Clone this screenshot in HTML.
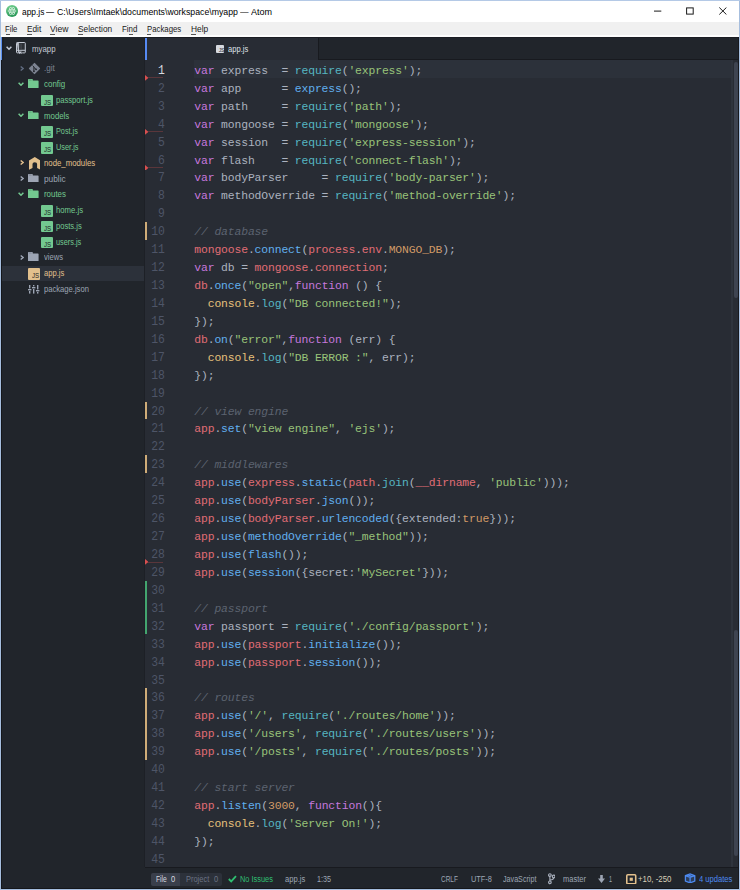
<!DOCTYPE html>
<html><head><meta charset="utf-8"><title>app.js - Atom</title>
<style>
html,body{margin:0;padding:0}
body{width:740px;height:890px;overflow:hidden;position:relative;background:#282c34;font-family:"Liberation Sans",sans-serif}
.abs{position:absolute}
#title{position:absolute;left:0;top:0;width:740px;height:22px;background:#fff}
#title .t{position:absolute;left:22px;top:4px;font-size:11.4px;color:#111;white-space:nowrap;letter-spacing:-0.1px}
#menu{position:absolute;left:0;top:22px;width:740px;height:13px;background:#f0f0f0}
#menu span{position:absolute;top:1px;font-size:11.2px;color:#111;white-space:nowrap}
#menu u{text-decoration:underline;text-underline-offset:1px}
#side{position:absolute;left:0;top:37px;width:145px;height:853px;background:#21252b}
#tabs{position:absolute;left:145px;top:37px;width:595px;height:23px;background:#21252b}
#tab{position:absolute;left:0;top:0;width:173px;height:23px;background:#282c34;border-left:2px solid #568af2;box-sizing:border-box}
#tab .tt{position:absolute;left:81px;top:5px;font-size:10.4px;color:#d7dae0;white-space:nowrap}
.ft{position:absolute;line-height:12px;height:12px;white-space:nowrap;transform-origin:0 50%;display:block}
.tl{font-size:10.4px;line-height:15.75px;white-space:nowrap;letter-spacing:-0.1px}
.sel{left:2px;width:142px;height:15.2px;background:#2c313a}
.jsi{width:12px;height:12px;border-radius:1.5px;overflow:hidden}
.jsi span{position:absolute;right:0.5px;bottom:-0.5px;font-size:7.5px;line-height:8px;color:#21252b;letter-spacing:-0.3px}
#ed{position:absolute;left:145px;top:60px;width:595px;height:807px;background:#282c34;overflow:hidden}
.ln{position:absolute;left:194.3px;height:18px;line-height:18px;margin-top:1.7px;font-family:"Liberation Mono",monospace;font-size:11.4px;letter-spacing:-0.136px;color:#abb2bf;white-space:pre}
.num{position:absolute;left:145px;width:19.6px;text-align:right;height:18px;line-height:18px;margin-top:1.7px;font-family:"Liberation Mono",monospace;font-size:11.4px;letter-spacing:-0.136px;color:#4e5567;transform:scaleY(1.07);transform-origin:50% 75%}
.num.cur{color:#d7dae0}
.k{color:#c678dd}.s{color:#98c379}.f{color:#61afef}.c{color:#56b6c2}.v{color:#e06c75}.n{color:#d19a66}.o{color:#e5c07b}.m{color:#5c6370;font-style:italic}
#curline{position:absolute;left:194px;top:60px;width:537px;height:18px;background:#2c313a}
.gbar{position:absolute;left:145px;width:1.5px}
.gdel{position:absolute;left:145px;width:0;height:0;border-top:2.9px solid transparent;border-bottom:2.9px solid transparent;border-left:3.4px solid #e05252}
.gdelline{position:absolute;left:148px;width:15px;height:1px;background:#e05252;opacity:.27}
#clip{position:absolute;left:0;top:0;width:740px;height:867px;overflow:hidden}
#status{position:absolute;left:145px;top:867px;width:595px;height:23px;background:#21252b;border-top:1px solid #181a1f;box-sizing:border-box}
#status span{position:absolute;top:5.5px;font-size:9.6px;color:#9da5b4;white-space:nowrap}
</style></head><body>
<div id="clip">
<div id="curline"></div>
<div class="gbar" style="top:222.27px;height:17.53px;background:#cfac78"></div><div class="gbar" style="top:401.57px;height:17.53px;background:#cfac78"></div><div class="gbar" style="top:455.36px;height:17.53px;background:#cfac78"></div><div class="gbar" style="top:580.87px;height:53.39px;background:#43a56f"></div><div class="gbar" style="top:688.45px;height:71.32px;background:#cfac78"></div><svg class="abs" style="left:144.8px;top:74.93px" width="3.4" height="5.8" viewBox="0 0 3.4 5.8"><path d="M0 0 L3.4 2.9 L0 5.8 Z" fill="#d95050"/></svg><div class="gdelline" style="top:77.43px"></div><svg class="abs" style="left:144.8px;top:128.72px" width="3.4" height="5.8" viewBox="0 0 3.4 5.8"><path d="M0 0 L3.4 2.9 L0 5.8 Z" fill="#d95050"/></svg><div class="gdelline" style="top:131.22px"></div><svg class="abs" style="left:144.8px;top:164.58px" width="3.4" height="5.8" viewBox="0 0 3.4 5.8"><path d="M0 0 L3.4 2.9 L0 5.8 Z" fill="#d95050"/></svg><div class="gdelline" style="top:167.08px"></div><svg class="abs" style="left:144.8px;top:559.04px" width="3.4" height="5.8" viewBox="0 0 3.4 5.8"><path d="M0 0 L3.4 2.9 L0 5.8 Z" fill="#d95050"/></svg><div class="gdelline" style="top:561.54px"></div>
<div class="num cur" style="top:60.20px">1</div><div class="num" style="top:78.13px">2</div><div class="num" style="top:96.06px">3</div><div class="num" style="top:113.99px">4</div><div class="num" style="top:131.92px">5</div><div class="num" style="top:149.85px">6</div><div class="num" style="top:167.78px">7</div><div class="num" style="top:185.71px">8</div><div class="num" style="top:203.64px">9</div><div class="num" style="top:221.57px">10</div><div class="num" style="top:239.50px">11</div><div class="num" style="top:257.43px">12</div><div class="num" style="top:275.36px">13</div><div class="num" style="top:293.29px">14</div><div class="num" style="top:311.22px">15</div><div class="num" style="top:329.15px">16</div><div class="num" style="top:347.08px">17</div><div class="num" style="top:365.01px">18</div><div class="num" style="top:382.94px">19</div><div class="num" style="top:400.87px">20</div><div class="num" style="top:418.80px">21</div><div class="num" style="top:436.73px">22</div><div class="num" style="top:454.66px">23</div><div class="num" style="top:472.59px">24</div><div class="num" style="top:490.52px">25</div><div class="num" style="top:508.45px">26</div><div class="num" style="top:526.38px">27</div><div class="num" style="top:544.31px">28</div><div class="num" style="top:562.24px">29</div><div class="num" style="top:580.17px">30</div><div class="num" style="top:598.10px">31</div><div class="num" style="top:616.03px">32</div><div class="num" style="top:633.96px">33</div><div class="num" style="top:651.89px">34</div><div class="num" style="top:669.82px">35</div><div class="num" style="top:687.75px">36</div><div class="num" style="top:705.68px">37</div><div class="num" style="top:723.61px">38</div><div class="num" style="top:741.54px">39</div><div class="num" style="top:759.47px">40</div><div class="num" style="top:777.40px">41</div><div class="num" style="top:795.33px">42</div><div class="num" style="top:813.26px">43</div><div class="num" style="top:831.19px">44</div><div class="num" style="top:849.12px">45</div>
<div class="ln" style="top:60.20px"><span class="k">var</span> express  = <span class="c">require</span>(<span class="s">'express'</span>);</div><div class="ln" style="top:78.13px"><span class="k">var</span> app      = <span class="f">express</span>();</div><div class="ln" style="top:96.06px"><span class="k">var</span> path     = <span class="c">require</span>(<span class="s">'path'</span>);</div><div class="ln" style="top:113.99px"><span class="k">var</span> mongoose = <span class="c">require</span>(<span class="s">'mongoose'</span>);</div><div class="ln" style="top:131.92px"><span class="k">var</span> session  = <span class="c">require</span>(<span class="s">'express-session'</span>);</div><div class="ln" style="top:149.85px"><span class="k">var</span> flash    = <span class="c">require</span>(<span class="s">'connect-flash'</span>);</div><div class="ln" style="top:167.78px"><span class="k">var</span> bodyParser     = <span class="c">require</span>(<span class="s">'body-parser'</span>);</div><div class="ln" style="top:185.71px"><span class="k">var</span> methodOverride = <span class="c">require</span>(<span class="s">'method-override'</span>);</div><div class="ln" style="top:203.64px"></div><div class="ln" style="top:221.57px"><span class="m">// database</span></div><div class="ln" style="top:239.50px"><span class="v">mongoose</span>.<span class="f">connect</span>(<span class="v">process</span>.<span class="v">env</span>.<span class="n">MONGO_DB</span>);</div><div class="ln" style="top:257.43px"><span class="k">var</span> db = <span class="v">mongoose</span>.<span class="v">connection</span>;</div><div class="ln" style="top:275.36px"><span class="v">db</span>.<span class="f">once</span>(<span class="s">"open"</span>,<span class="k">function</span> () {</div><div class="ln" style="top:293.29px">  <span class="o">console</span>.<span class="c">log</span>(<span class="s">"DB connected!"</span>);</div><div class="ln" style="top:311.22px">});</div><div class="ln" style="top:329.15px"><span class="v">db</span>.<span class="f">on</span>(<span class="s">"error"</span>,<span class="k">function</span> (err) {</div><div class="ln" style="top:347.08px">  <span class="o">console</span>.<span class="c">log</span>(<span class="s">"DB ERROR :"</span>, err);</div><div class="ln" style="top:365.01px">});</div><div class="ln" style="top:382.94px"></div><div class="ln" style="top:400.87px"><span class="m">// view engine</span></div><div class="ln" style="top:418.80px"><span class="v">app</span>.<span class="f">set</span>(<span class="s">"view engine"</span>, <span class="s">'ejs'</span>);</div><div class="ln" style="top:436.73px"></div><div class="ln" style="top:454.66px"><span class="m">// middlewares</span></div><div class="ln" style="top:472.59px"><span class="v">app</span>.<span class="f">use</span>(<span class="v">express</span>.<span class="f">static</span>(<span class="v">path</span>.<span class="c">join</span>(<span class="v">__dirname</span>, <span class="s">'public'</span>)));</div><div class="ln" style="top:490.52px"><span class="v">app</span>.<span class="f">use</span>(<span class="v">bodyParser</span>.<span class="f">json</span>());</div><div class="ln" style="top:508.45px"><span class="v">app</span>.<span class="f">use</span>(<span class="v">bodyParser</span>.<span class="f">urlencoded</span>({extended:<span class="n">true</span>}));</div><div class="ln" style="top:526.38px"><span class="v">app</span>.<span class="f">use</span>(<span class="f">methodOverride</span>(<span class="s">"_method"</span>));</div><div class="ln" style="top:544.31px"><span class="v">app</span>.<span class="f">use</span>(<span class="f">flash</span>());</div><div class="ln" style="top:562.24px"><span class="v">app</span>.<span class="f">use</span>(<span class="f">session</span>({secret:<span class="s">'MySecret'</span>}));</div><div class="ln" style="top:580.17px"></div><div class="ln" style="top:598.10px"><span class="m">// passport</span></div><div class="ln" style="top:616.03px"><span class="k">var</span> passport = <span class="c">require</span>(<span class="s">'./config/passport'</span>);</div><div class="ln" style="top:633.96px"><span class="v">app</span>.<span class="f">use</span>(<span class="v">passport</span>.<span class="f">initialize</span>());</div><div class="ln" style="top:651.89px"><span class="v">app</span>.<span class="f">use</span>(<span class="v">passport</span>.<span class="f">session</span>());</div><div class="ln" style="top:669.82px"></div><div class="ln" style="top:687.75px"><span class="m">// routes</span></div><div class="ln" style="top:705.68px"><span class="v">app</span>.<span class="f">use</span>(<span class="s">'/'</span>, <span class="c">require</span>(<span class="s">'./routes/home'</span>));</div><div class="ln" style="top:723.61px"><span class="v">app</span>.<span class="f">use</span>(<span class="s">'/users'</span>, <span class="c">require</span>(<span class="s">'./routes/users'</span>));</div><div class="ln" style="top:741.54px"><span class="v">app</span>.<span class="f">use</span>(<span class="s">'/posts'</span>, <span class="c">require</span>(<span class="s">'./routes/posts'</span>));</div><div class="ln" style="top:759.47px"></div><div class="ln" style="top:777.40px"><span class="m">// start server</span></div><div class="ln" style="top:795.33px"><span class="v">app</span>.<span class="f">listen</span>(<span class="n">3000</span>, <span class="k">function</span>(){</div><div class="ln" style="top:813.26px">  <span class="o">console</span>.<span class="c">log</span>(<span class="s">'Server On!'</span>);</div><div class="ln" style="top:831.19px">});</div><div class="ln" style="top:849.12px"></div>
<div class="abs" style="left:731px;top:60px;width:1.5px;height:807px;background:#2f343d"></div>
<div class="abs" style="left:734px;top:62px;width:3.5px;height:235.5px;background:#3e4451;border-radius:2px"></div>
<div class="abs" style="left:734px;top:630px;width:3.5px;height:226px;background:#3e4451;border-radius:2px"></div>
<div class="abs" style="left:737.7px;top:60px;width:1.3px;height:807px;background:#1e2127"></div>
</div>
<div id="title">
<svg class="abs" style="left:6.1px;top:4.8px" width="12" height="12" viewBox="0 0 13 13"><defs><linearGradient id="ag" x1="0" y1="0" x2="0.3" y2="1"><stop offset="0" stop-color="#76d492"/><stop offset="1" stop-color="#2c9a5a"/></linearGradient></defs><circle cx="6.5" cy="6.5" r="6.5" fill="url(#ag)"/><g fill="none" stroke="#e9f7ee" stroke-width=".75" opacity=".9"><ellipse cx="6.5" cy="6.5" rx="4.4" ry="1.9"/><ellipse cx="6.5" cy="6.5" rx="4.4" ry="1.9" transform="rotate(60 6.5 6.5)"/><ellipse cx="6.5" cy="6.5" rx="4.4" ry="1.9" transform="rotate(120 6.5 6.5)"/></g><circle cx="6.5" cy="6.5" r=".9" fill="#e9f7ee"/></svg>
<div class="ft" style="left:22.00px;top:6.05px;font-size:9.1px;color:#000;transform:scaleX(0.9224);">app.js</div><div class="ft" style="left:46.00px;top:6.05px;font-size:9.1px;color:#000;transform:scaleX(0.8791);">—</div><div class="ft" style="left:56.50px;top:6.05px;font-size:9.1px;color:#000;transform:scaleX(0.9626);">C:\Users\Imtaek\documents\workspace\myapp</div><div class="ft" style="left:240.30px;top:6.05px;font-size:9.1px;color:#000;transform:scaleX(0.9451);">—</div><div class="ft" style="left:251.30px;top:6.05px;font-size:9.1px;color:#000;transform:scaleX(0.9934);">Atom</div>
<svg class="abs" style="left:653.9px;top:7px" width="76" height="8" viewBox="0 0 76 8"><path d="M0 4.1 H7.3" stroke="#1a1a1a" stroke-width="1"/><rect x="32.6" y="0.9" width="6.6" height="6.2" fill="none" stroke="#1a1a1a" stroke-width="1"/><path d="M65.3 0.5 L72.4 7.5 M72.4 0.5 L65.3 7.5" stroke="#1a1a1a" stroke-width="1"/></svg>
</div>
<div id="menu"></div>
<div class="ft" style="left:5.40px;top:22.58px;font-size:9.0px;color:#1a1a1a;transform:scaleX(0.8550);">File</div><div class="abs" style="left:5.60px;top:33.7px;width:4.30px;height:1px;background:#555"></div><div class="ft" style="left:26.80px;top:22.58px;font-size:9.0px;color:#1a1a1a;transform:scaleX(0.9156);">Edit</div><div class="abs" style="left:27.00px;top:33.7px;width:5.10px;height:1px;background:#555"></div><div class="ft" style="left:50.00px;top:22.58px;font-size:9.0px;color:#1a1a1a;transform:scaleX(0.9511);">View</div><div class="abs" style="left:50.20px;top:33.7px;width:5.31px;height:1px;background:#555"></div><div class="ft" style="left:77.90px;top:22.58px;font-size:9.0px;color:#1a1a1a;transform:scaleX(0.9210);">Selection</div><div class="abs" style="left:78.10px;top:33.7px;width:5.13px;height:1px;background:#555"></div><div class="ft" style="left:121.90px;top:22.58px;font-size:9.0px;color:#1a1a1a;transform:scaleX(0.8796);">Find</div><div class="abs" style="left:128.69px;top:33.7px;width:4.00px;height:1px;background:#555"></div><div class="ft" style="left:146.50px;top:22.58px;font-size:9.0px;color:#1a1a1a;transform:scaleX(0.8653);">Packages</div><div class="abs" style="left:146.70px;top:33.7px;width:4.79px;height:1px;background:#555"></div><div class="ft" style="left:190.50px;top:22.58px;font-size:9.0px;color:#1a1a1a;transform:scaleX(0.9292);">Help</div><div class="abs" style="left:190.70px;top:33.7px;width:5.64px;height:1px;background:#555"></div>
<div class="abs" style="left:0;top:35px;width:740px;height:2px;background:#fdfdfd"></div>
<div id="side">
</div>
<div class="abs" style="left:1px;top:37px;width:1.3px;height:23px;background:#5b8fef"></div><div class="abs" style="left:2.3px;top:37px;width:1.5px;height:23px;background:#1c1f25"></div>
<div class="abs" style="left:144px;top:37px;width:1px;height:830px;background:#1d2026"></div>
<!-- root row -->
<svg class="abs" style="left:5.9px;top:46.4px" width="6" height="4.2" viewBox="0 0 6 4.2"><path d="M0.6 0.7 L3 3.2 L5.4 0.7" fill="none" stroke="#c5cbd6" stroke-width="1.5"/></svg>
<svg class="abs" style="left:16px;top:41.7px" width="10" height="12.2" viewBox="0 0 10 12.2"><path d="M1.3 0.5 H8.5 Q9.3 0.5 9.3 1.3 V10.2 Q9.3 10.9 8.5 10.9 H6.2 M2.8 10.9 H1.3 Q0.5 10.9 0.5 10.2 V1.3 Q0.5 0.5 1.3 0.5 Z" fill="rgba(197,203,214,.07)" stroke="#c5cbd6" stroke-width="1"/><path d="M2.4 0.8 V8" stroke="#c5cbd6" stroke-width="1.1" opacity=".85"/><path d="M3.8 1.6 V7.2 M5.2 1.6 V7.2" stroke="#c5cbd6" stroke-width=".6" opacity=".28"/><path d="M0.5 8.3 H9.3" stroke="#c5cbd6" stroke-width="1"/><path d="M3 9.4 H5.6 V12.2 L4.3 11.2 L3 12.2 Z" fill="#c5cbd6"/></svg>
<div class="ft" style="left:31.70px;top:43.00px;font-size:9.8px;color:#c5cbd6;transform:scaleX(0.8023);">myapp</div>
<svg class="abs" style="left:19.6px;top:65.50px" width="4.2" height="5" viewBox="0 0 4.2 5"><path d="M0.7 0.5 L3.1 2.5 L0.7 4.5" fill="none" stroke="#5f6b80" stroke-width="1.4"/></svg><svg class="abs" style="left:28.1px;top:62.15px" width="13" height="13" viewBox="0 0 13 13"><rect x="2.3" y="2.3" width="8.4" height="8.4" rx="0.8" transform="rotate(45 6.5 6.5)" fill="#7c8391"/><path d="M4.6 3.6 L5.9 4.9 V9.6 M5.9 5.4 L8 7.3" stroke="#21252b" stroke-width="1" fill="none"/><circle cx="5.9" cy="9.3" r="0.9" fill="#21252b"/><circle cx="8.1" cy="7.3" r="0.9" fill="#21252b"/></svg><div class="ft" style="left:43.90px;top:62.35px;font-size:9.8px;color:#7c8391;transform:scaleX(0.8261);">.git</div><svg class="abs" style="left:17.8px;top:81.65px" width="6" height="4.2" viewBox="0 0 6 4.2"><path d="M0.6 0.7 L3 3.2 L5.4 0.7" fill="none" stroke="#73c990" stroke-width="1.5"/></svg><svg class="abs" style="left:28.4px;top:79.00px" width="10.6" height="8.9" viewBox="0 0 10.6 8.9"><path d="M0 0.5 Q0 0 0.5 0 H4.3 Q4.8 0 4.8 0.5 V1.4 H10.1 Q10.6 1.4 10.6 1.9 V8.4 Q10.6 8.9 10.1 8.9 H0.5 Q0 8.9 0 8.4 Z" fill="#73c990"/><rect x="1" y="0.7" width="2.6" height="0.7" fill="#21252b" opacity=".35"/></svg><div class="ft" style="left:43.90px;top:78.10px;font-size:9.8px;color:#73c990;transform:scaleX(0.8107);">config</div><div class="abs" style="left:40.9px;top:94.75px;width:12px;height:11.5px;background:#73c990;border-radius:1px"></div><div class="ft" style="left:44.20px;top:96.79px;font-size:7.4px;color:#1c1f24;transform:scaleX(0.8221);">JS</div><div class="ft" style="left:56.00px;top:93.85px;font-size:9.8px;color:#73c990;transform:scaleX(0.7787);">passport.js</div><svg class="abs" style="left:17.8px;top:113.15px" width="6" height="4.2" viewBox="0 0 6 4.2"><path d="M0.6 0.7 L3 3.2 L5.4 0.7" fill="none" stroke="#73c990" stroke-width="1.5"/></svg><svg class="abs" style="left:28.4px;top:110.50px" width="10.6" height="8.9" viewBox="0 0 10.6 8.9"><path d="M0 0.5 Q0 0 0.5 0 H4.3 Q4.8 0 4.8 0.5 V1.4 H10.1 Q10.6 1.4 10.6 1.9 V8.4 Q10.6 8.9 10.1 8.9 H0.5 Q0 8.9 0 8.4 Z" fill="#73c990"/><rect x="1" y="0.7" width="2.6" height="0.7" fill="#21252b" opacity=".35"/></svg><div class="ft" style="left:43.90px;top:109.60px;font-size:9.8px;color:#73c990;transform:scaleX(0.8008);">models</div><div class="abs" style="left:40.9px;top:126.25px;width:12px;height:11.5px;background:#73c990;border-radius:1px"></div><div class="ft" style="left:44.20px;top:128.29px;font-size:7.4px;color:#1c1f24;transform:scaleX(0.8221);">JS</div><div class="ft" style="left:56.20px;top:125.35px;font-size:9.8px;color:#73c990;transform:scaleX(0.7412);">Post.js</div><div class="abs" style="left:40.9px;top:142.00px;width:12px;height:11.5px;background:#73c990;border-radius:1px"></div><div class="ft" style="left:44.20px;top:144.04px;font-size:7.4px;color:#1c1f24;transform:scaleX(0.8221);">JS</div><div class="ft" style="left:56.20px;top:141.10px;font-size:9.8px;color:#73c990;transform:scaleX(0.7512);">User.js</div><svg class="abs" style="left:19.6px;top:160.00px" width="4.2" height="5" viewBox="0 0 4.2 5"><path d="M0.7 0.5 L3.1 2.5 L0.7 4.5" fill="none" stroke="#e2c08d" stroke-width="1.4"/></svg><svg class="abs" style="left:28.9px;top:156.95px" width="11.6" height="12.8" viewBox="0 0 11.6 12.8"><path d="M5.8 0 L11.6 3.5 V12.8 L8.1 11 V7 Q8.1 5.3 5.8 5.3 Q3.5 5.3 3.5 7 V11 L0 12.8 V3.5 Z" fill="#e2c08d"/></svg><div class="ft" style="left:43.80px;top:156.85px;font-size:9.8px;color:#e2c08d;transform:scaleX(0.7963);">node_modules</div><svg class="abs" style="left:19.6px;top:175.75px" width="4.2" height="5" viewBox="0 0 4.2 5"><path d="M0.7 0.5 L3.1 2.5 L0.7 4.5" fill="none" stroke="#9da5b4" stroke-width="1.4"/></svg><svg class="abs" style="left:28.4px;top:173.50px" width="10.6" height="8.9" viewBox="0 0 10.6 8.9"><path d="M0 0.5 Q0 0 0.5 0 H4.3 Q4.8 0 4.8 0.5 V1.4 H10.1 Q10.6 1.4 10.6 1.9 V8.4 Q10.6 8.9 10.1 8.9 H0.5 Q0 8.9 0 8.4 Z" fill="#9da5b4"/><rect x="1" y="0.7" width="2.6" height="0.7" fill="#21252b" opacity=".35"/></svg><div class="ft" style="left:43.80px;top:172.60px;font-size:9.8px;color:#9da5b4;transform:scaleX(0.8474);">public</div><svg class="abs" style="left:17.8px;top:191.90px" width="6" height="4.2" viewBox="0 0 6 4.2"><path d="M0.6 0.7 L3 3.2 L5.4 0.7" fill="none" stroke="#73c990" stroke-width="1.5"/></svg><svg class="abs" style="left:28.4px;top:189.25px" width="10.6" height="8.9" viewBox="0 0 10.6 8.9"><path d="M0 0.5 Q0 0 0.5 0 H4.3 Q4.8 0 4.8 0.5 V1.4 H10.1 Q10.6 1.4 10.6 1.9 V8.4 Q10.6 8.9 10.1 8.9 H0.5 Q0 8.9 0 8.4 Z" fill="#73c990"/><rect x="1" y="0.7" width="2.6" height="0.7" fill="#21252b" opacity=".35"/></svg><div class="ft" style="left:43.80px;top:188.35px;font-size:9.8px;color:#73c990;transform:scaleX(0.8040);">routes</div><div class="abs" style="left:40.9px;top:205.00px;width:12px;height:11.5px;background:#73c990;border-radius:1px"></div><div class="ft" style="left:44.20px;top:207.04px;font-size:7.4px;color:#1c1f24;transform:scaleX(0.8221);">JS</div><div class="ft" style="left:56.00px;top:204.10px;font-size:9.8px;color:#73c990;transform:scaleX(0.7868);">home.js</div><div class="abs" style="left:40.9px;top:220.75px;width:12px;height:11.5px;background:#73c990;border-radius:1px"></div><div class="ft" style="left:44.20px;top:222.79px;font-size:7.4px;color:#1c1f24;transform:scaleX(0.8221);">JS</div><div class="ft" style="left:56.00px;top:219.85px;font-size:9.8px;color:#73c990;transform:scaleX(0.7735);">posts.js</div><div class="abs" style="left:40.9px;top:236.50px;width:12px;height:11.5px;background:#73c990;border-radius:1px"></div><div class="ft" style="left:44.20px;top:238.54px;font-size:7.4px;color:#1c1f24;transform:scaleX(0.8221);">JS</div><div class="ft" style="left:56.00px;top:235.60px;font-size:9.8px;color:#73c990;transform:scaleX(0.7463);">users.js</div><svg class="abs" style="left:19.6px;top:254.50px" width="4.2" height="5" viewBox="0 0 4.2 5"><path d="M0.7 0.5 L3.1 2.5 L0.7 4.5" fill="none" stroke="#9da5b4" stroke-width="1.4"/></svg><svg class="abs" style="left:28.4px;top:252.25px" width="10.6" height="8.9" viewBox="0 0 10.6 8.9"><path d="M0 0.5 Q0 0 0.5 0 H4.3 Q4.8 0 4.8 0.5 V1.4 H10.1 Q10.6 1.4 10.6 1.9 V8.4 Q10.6 8.9 10.1 8.9 H0.5 Q0 8.9 0 8.4 Z" fill="#9da5b4"/><rect x="1" y="0.7" width="2.6" height="0.7" fill="#21252b" opacity=".35"/></svg><div class="ft" style="left:43.80px;top:251.35px;font-size:9.8px;color:#9da5b4;transform:scaleX(0.7753);">views</div><div class="abs sel" style="top:265.93px"></div><div class="abs" style="left:28.4px;top:268.00px;width:12px;height:11.5px;background:#e2c08d;border-radius:1px"></div><div class="ft" style="left:31.70px;top:270.04px;font-size:7.4px;color:#1c1f24;transform:scaleX(0.8221);">JS</div><div class="ft" style="left:43.90px;top:267.10px;font-size:9.8px;color:#e2c08d;transform:scaleX(0.7724);">app.js</div><svg class="abs" style="left:28.2px;top:284.95px" width="11.4" height="8.6" viewBox="0 0 11.4 8.6" fill="#9da5b4"><rect x="1.0" y="0" width="1.4" height="3.4"/><rect x="1.0" y="6.0" width="1.4" height="2.6"/><rect x="0" y="4.0" width="3.4" height="1.4"/><rect x="5.0" y="0" width="1.4" height="1.4"/><rect x="5.0" y="4.0" width="1.4" height="4.6"/><rect x="4.0" y="2.0" width="3.4" height="1.4"/><rect x="9.0" y="0" width="1.4" height="4.4"/><rect x="9.0" y="7.0" width="1.4" height="1.6"/><rect x="8.0" y="5.0" width="3.4" height="1.4"/></svg><div class="ft" style="left:43.80px;top:282.85px;font-size:9.8px;color:#9da5b4;transform:scaleX(0.7774);">package.json</div>
<div id="tabs"><div id="tab">
<div class="abs jsi" style="left:69px;top:8px;width:8px;height:8px;background:#d7dae0;border-radius:1px"><span style="font-size:5px;line-height:5px;right:0;bottom:0">JS</span></div>
</div></div>
<div class="ft" style="left:228.00px;top:43.08px;font-size:9.3px;color:#dfe2e8;transform:scaleX(0.8140);">app.js</div>
<div class="abs" style="left:145px;top:37px;width:595px;height:1px;background:#1b1d23"></div>
<div class="abs" style="left:318px;top:59px;width:422px;height:1px;background:#181a1f"></div>
<div class="abs" style="left:318px;top:38px;width:1px;height:21px;background:#181a1f"></div>
<div id="status"></div>
<div class="abs" style="left:151px;top:872.5px;width:29.2px;height:13.5px;background:#3a3f4b;border-radius:2px 0 0 2px"></div>
<div class="abs" style="left:180.2px;top:872.5px;width:42px;height:13.5px;background:#2c313a;border-radius:0 2px 2px 0"></div>
<div class="ft" style="left:155.80px;top:872.82px;font-size:8.9px;color:#d7dae0;transform:scaleX(0.7531);">File</div><div class="ft" style="left:171.20px;top:872.82px;font-size:8.9px;color:#d7dae0;transform:scaleX(0.8485);">0</div>
<div class="ft" style="left:186.00px;top:872.82px;font-size:8.9px;color:#6b7384;transform:scaleX(0.8411);">Project</div><div class="ft" style="left:214.00px;top:872.82px;font-size:8.9px;color:#6b7384;transform:scaleX(0.8485);">0</div>
<svg class="abs" style="left:228px;top:874.5px" width="9" height="8" viewBox="0 0 9 8"><path d="M0.8 4.0 L3.2 6.4 L8 1.2" fill="none" stroke="#2fbf71" stroke-width="1.8"/></svg>
<div class="ft" style="left:239.60px;top:872.82px;font-size:8.9px;color:#2fbf71;transform:scaleX(0.8339);">No Issues</div>
<div class="ft" style="left:284.70px;top:872.82px;font-size:8.9px;color:#9da5b4;transform:scaleX(0.8547);">app.js</div>
<div class="ft" style="left:317.40px;top:872.82px;font-size:8.9px;color:#9da5b4;transform:scaleX(0.8140);">1:35</div>
<div class="ft" style="left:441.30px;top:872.82px;font-size:8.9px;color:#9da5b4;transform:scaleX(0.7271);">CRLF</div>
<div class="ft" style="left:470.60px;top:872.82px;font-size:8.9px;color:#9da5b4;transform:scaleX(0.8328);">UTF-8</div>
<div class="ft" style="left:503.30px;top:872.82px;font-size:8.9px;color:#9da5b4;transform:scaleX(0.8062);">JavaScript</div>
<svg class="abs" style="left:547.6px;top:873.2px" width="7.6" height="11.4" viewBox="0 0 8 12"><circle cx="2" cy="2.2" r="1.4" fill="none" stroke="#a7aebb" stroke-width="1.25"/><circle cx="2" cy="9.8" r="1.4" fill="none" stroke="#a7aebb" stroke-width="1.25"/><circle cx="6" cy="3.6" r="1.4" fill="none" stroke="#a7aebb" stroke-width="1.25"/><path d="M2 3.6 V8.4 M6 5 Q6 7 2 7.6" fill="none" stroke="#a7aebb" stroke-width="1.25"/></svg>
<div class="ft" style="left:562.80px;top:872.82px;font-size:8.9px;color:#9da5b4;transform:scaleX(0.8456);">master</div>
<svg class="abs" style="left:598.2px;top:875px" width="7" height="8" viewBox="0 0 7 8"><path d="M2.2 0 H4.8 V3.6 H7 L3.5 8 L0 3.6 H2.2 Z" fill="#9da5b4"/></svg>
<div class="ft" style="left:609.30px;top:872.82px;font-size:8.9px;color:#9da5b4;transform:scaleX(0.6061);">1</div>
<svg class="abs" style="left:626.1px;top:873.6px" width="10.5" height="10.5" viewBox="0 0 10 10"><rect x=".75" y=".75" width="8.5" height="8.5" rx="1" fill="none" stroke="#e2c08d" stroke-width="1.5"/><rect x="3.5" y="3.5" width="3" height="3" fill="#e2c08d"/></svg>
<div class="ft" style="left:638.20px;top:872.82px;font-size:8.9px;color:#d9ceb8;transform:scaleX(0.8849);">+10, -250</div>
<svg class="abs" style="left:684.4px;top:872.8px" width="12.2" height="10.4" viewBox="0 0 11 10"><path d="M1 2.5 L5.5 0.8 L10 2.5 V7.8 L5.5 9.5 L1 7.8 Z M1 2.5 L5.5 4.2 L10 2.5 M5.5 4.2 V9.5 M3.2 1.7 L7.8 3.4" fill="rgba(77,138,240,.25)" stroke="#4d8af0" stroke-width="1.25"/></svg>
<div class="ft" style="left:699.40px;top:872.82px;font-size:8.9px;color:#4d8af0;transform:scaleX(0.8569);">4 updates</div>
<div class="abs" style="left:1px;top:60px;width:1.2px;height:829px;background:#14161a"></div>
<div class="abs" style="left:1px;top:887.6px;width:738px;height:1.2px;background:#14161a"></div>
<div class="abs" style="left:737.6px;top:37px;width:1.2px;height:851px;background:#16181d"></div>
<div class="abs" style="left:0;top:0;width:1.1px;height:890px;background:#a6bede"></div>
<div class="abs" style="left:0;top:888.7px;width:740px;height:1.3px;background:#a6bede"></div>
<div class="abs" style="left:738.7px;top:0;width:1.3px;height:890px;background:#a6bede"></div>
<div class="abs" style="left:0;top:0;width:740px;height:1px;background:#b4c9e6"></div>
</body></html>
